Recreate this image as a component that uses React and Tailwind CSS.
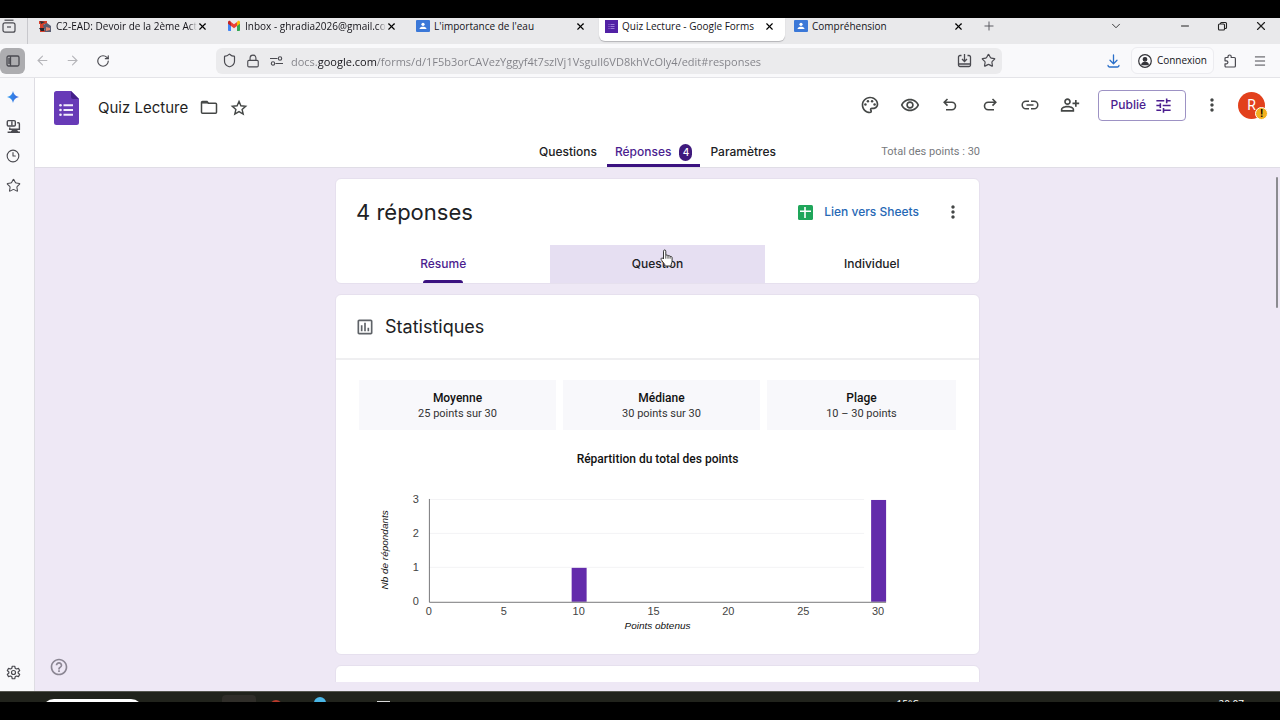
import React from "react";
import {
  Shield,
  Lock,
  Star,
  Plus,
  ChevronDown,
  Minus,
  X,
  ArrowLeft,
  ArrowRight,
  RotateCw,
  Menu,
  Clock3,
} from "lucide-react";
import {
  MdOutlinePalette,
  MdOutlineRemoveRedEye,
  MdOutlinePersonAddAlt,
  MdTune,
  MdMoreVert,
  MdOutlineAssessment,
  MdHelpOutline,
} from "react-icons/md";

const UI = "font-['Open_Sans','Noto_Sans',sans-serif]";
const PRODUCT = "font-['Inter',sans-serif]";
const BODY = "font-['Roboto',sans-serif]";

function MoodleIcon() {
  return (
    <svg viewBox="0 0 14 13" className="h-[13px] w-[14px] shrink-0">
      <path d="M1 1h8v3H6v6h2v2H2V4H1z" fill="#d8402a" />
      <path d="M5 5l4-2 4 3v6H7z" fill="#5b5f73" />
      <path d="M1 8h5v3H3z" fill="#22242c" />
      <path d="M8 7l4 1v2l-4 1z" fill="#e8866e" />
      <path d="M2 1l5 1-4 2z" fill="#2b2e38" />
    </svg>
  );
}

function GmailIcon() {
  return (
    <svg viewBox="0 0 14 12" className="h-[12px] w-[14px] shrink-0">
      <path d="M1 2v8.2c0 .5.3.8.8.8H4V5z" fill="#4285f4" />
      <path d="M13 2v8.2c0 .5-.3.8-.8.8H10V5z" fill="#34a853" />
      <path d="M10 2.2V6l3-2.2V2.3c0-1.300-1.400-1.900-2.300-1.200z" fill="#fbbc04" />
      <path d="M4 6V2l3 2.300L10 2v4L7 8.200z" fill="#ea4335" />
      <path d="M1 2.300v1.500L4 6V2.200L3.300 1.100C2.400.4 1 1 1 2.300z" fill="#c5221f" />
    </svg>
  );
}

function ClassroomIcon() {
  return (
    <svg viewBox="0 0 14 12" className="h-[12px] w-[14px] shrink-0">
      <rect width="14" height="12" rx="1" fill="#3b78d8" />
      <circle cx="7" cy="4.300" r="1.600" fill="#fff" />
      <path d="M3.500 9c0-1.700 2-2.300 3.500-2.300s3.500.6 3.500 2.300z" fill="#fff" />
    </svg>
  );
}

function FormsFavicon() {
  return (
    <svg viewBox="0 0 13 13" className="h-[13px] w-[13px] shrink-0">
      <rect width="13" height="13" fill="#5221a5" />
      <path d="M3.500 4.500h1M5.500 4.500h4M3.500 6.500h1M5.500 6.500h4M3.500 8.500h1M5.500 8.500h4" stroke="#9b7bd6" />
    </svg>
  );
}

const browserTabs = [
  { title: "C2-EAD: Devoir de la 2ème Activité", icon: <MoodleIcon />, fade: true },
  { title: "Inbox - ghradia2026@gmail.com", icon: <GmailIcon />, fade: true },
  { title: "L'importance de l'eau", icon: <ClassroomIcon /> },
  { title: "Quiz Lecture - Google Forms", icon: <FormsFavicon />, active: true },
  { title: "Compréhension", icon: <ClassroomIcon /> },
];

function BrowserTab({ title, icon, active, fade }) {
  return (
    <div
      className={`mr-[3px] flex h-[23px] w-[186px] min-w-0 items-center pr-[10px] pb-[7px] pl-[6px] ${
        active ? "rounded-b-md bg-white shadow-[0_1px_1px_#b4b4b8]" : ""
      }`}
    >
      <a href="#tab" className="flex min-w-0 flex-1 items-center gap-1">
        {icon}
        <span
          className={`block min-w-0 flex-1 overflow-hidden whitespace-nowrap ${
            fade ? "[mask-image:linear-gradient(to_left,transparent,black_8px)]" : ""
          }`}
        >
          {title}
        </span>
      </a>
      <button aria-label={`Fermer ${title}`} className="text-black">
        <X size={11} strokeWidth={2.5} />
      </button>
    </div>
  );
}

function TabStrip() {
  return (
    <div className={`flex h-[26px] shrink-0 items-start overflow-hidden bg-[#e9e9eb] text-[10px] leading-4 text-[#15141a] ${UI}`}>
      <button aria-label="Onglets récents" className="flex h-4 w-[27px] items-center pl-[2px] text-[#4a4a50]">
        <svg viewBox="0 0 14 14" className="h-[14px] w-[14px]" fill="none" stroke="currentColor" strokeWidth="1.200">
          <path d="M2.500 1.200h9" />
          <rect x="1" y="3.800" width="12" height="9.400" rx="2" />
          <path d="M5 8h4" />
        </svg>
      </button>
      <div className="h-[26px] w-px bg-[#c8c8cc]" />
      <div className="flex min-w-0 pl-1">
        {browserTabs.map((t) => (
          <BrowserTab key={t.title} {...t} />
        ))}
      </div>
      <button aria-label="Nouvel onglet" className="flex h-4 w-8 items-center pl-[5px] text-[#4a4a50]">
        <Plus size={14} strokeWidth={1.5} />
      </button>
      <div className="ml-auto flex h-4 items-center text-[#222]">
        <button aria-label="Lister les onglets" className="mr-[56px]">
          <ChevronDown size={14} strokeWidth={1.5} />
        </button>
        <button aria-label="Réduire" className="mr-[26px]">
          <Minus size={12} strokeWidth={2} />
        </button>
        <button aria-label="Restaurer" className="mr-[26px]">
          <svg viewBox="0 0 11 11" className="h-[11px] w-[11px]" fill="none" stroke="currentColor" strokeWidth="1.100">
            <rect x="1.500" y="3" width="6" height="6" rx="1" />
            <path d="M3.500 3V2.500a1 1 0 0 1 1-1h4a1 1 0 0 1 1 1v4a1 1 0 0 1-1 1H7.500" />
          </svg>
        </button>
        <button aria-label="Fermer la fenêtre" className="mr-3">
          <X size={14} strokeWidth={2} />
        </button>
      </div>
    </div>
  );
}

function Toolbar() {
  return (
    <div className={`flex h-[34px] shrink-0 items-center border-b border-[#e4e4e8] bg-[#f9f9fb] text-[#4a4a50] ${UI}`}>
      <button aria-label="Panneau latéral" className="flex h-[26px] w-[25px] shrink-0 items-center justify-center rounded-md bg-[#adadb0]">
        <svg viewBox="0 0 14 12" className="h-[12px] w-[14px]" fill="none" stroke="currentColor" strokeWidth="1.300">
          <rect x="1" y="1" width="12" height="10" rx="1.500" />
          <path d="M4.500 1v10M3 3v6" />
        </svg>
      </button>
      <button aria-label="Page précédente" className="ml-[10px] text-[#b5b5b9]">
        <ArrowLeft size={15} strokeWidth={1.7} />
      </button>
      <button aria-label="Page suivante" className="ml-[15px] text-[#b5b5b9]">
        <ArrowRight size={15} strokeWidth={1.7} />
      </button>
      <button aria-label="Actualiser" className="ml-4">
        <RotateCw size={14} strokeWidth={2} />
      </button>
      <div className="ml-[106px] flex h-[26px] min-w-0 max-w-[786px] flex-1 items-center rounded-md bg-[#ebebed] px-[6px]">
        <Shield size={15} strokeWidth={1.9} />
        <Lock size={14} strokeWidth={1.9} className="ml-[9px]" />
        <svg viewBox="0 0 13 10" className="ml-[10px] h-[10px] w-[13px]" fill="none" stroke="currentColor" strokeWidth="1.100">
          <path d="M0 2.500h7.500M5.500 7.500H13" />
          <circle cx="10" cy="2.500" r="1.700" />
          <circle cx="3" cy="7.500" r="1.700" />
        </svg>
        <input
          aria-label="Adresse"
          readOnly
          value="docs.google.com/forms/d/1F5b3orCAVezYggyf4t7szlVj1VsguIl6VD8khVcOly4/edit#responses"
          className="ml-2 h-5 min-w-0 flex-1 bg-[linear-gradient(90deg,#808086_26px,#15141a_26px,#15141a_86px,#808086_86px)] bg-clip-text pt-[2px] text-[11px] text-transparent outline-none"
        />
        <button aria-label="Installer la page" className="mr-[9px]">
          <svg viewBox="0 0 15 14" className="h-[14px] w-[15px]" fill="none" stroke="currentColor" strokeWidth="1.300">
            <path d="M4.500 1.500H3A1.500 1.500 0 0 0 1.500 3v8A1.500 1.500 0 0 0 3 12.500h9a1.500 1.500 0 0 0 1.500-1.500V3A1.500 1.500 0 0 0 12 1.500h-1.500M1.500 10h12M7.500 0v7M5 5l2.500 2.500L10 5" />
          </svg>
        </button>
        <button aria-label="Marquer cette page">
          <Star size={15} strokeWidth={1.9} />
        </button>
      </div>
      <div className="ml-auto flex items-center">
        <button aria-label="Téléchargements" className="mr-[11px] text-[#2a6fc9]">
          <svg viewBox="0 0 13 14" className="h-[14px] w-[13px]" fill="none" stroke="currentColor" strokeWidth="1.300" strokeLinecap="round" strokeLinejoin="round">
            <path d="M6.500 1v8.500M3 6.200l3.500 3.500L10 6.200M1 11.300c0 1.200.4 1.700 1.500 1.700h8c1.100 0 1.500-.5 1.500-1.700" />
          </svg>
        </button>
        <button className="mr-[9px] flex h-[27px] items-center gap-[5px] rounded-md border border-[#ececf0] bg-[#fbfbfd] px-[6px] text-[10px] text-[#15141a]">
          <svg viewBox="0 0 14 14" className="h-[14px] w-[14px]" fill="none" stroke="#333338" strokeWidth="1.200">
            <circle cx="7" cy="7" r="6.300" />
            <circle cx="7" cy="5.300" r="1.800" fill="#333338" />
            <path d="M3.800 10.600c0-3 6.400-3 6.400 0z" fill="#333338" />
          </svg>
          Connexion
        </button>
        <button aria-label="Extensions" className="mr-[16px]">
          <svg viewBox="0 0 14 14" className="h-[14px] w-[14px]" fill="none" stroke="currentColor" strokeWidth="1.200" strokeLinejoin="round">
            <path d="M5 3.500V2.600a1.600 1.600 0 0 1 3.200 0v.9h3.200a1 1 0 0 1 1 1v7.500a1 1 0 0 1-1 1H3a1 1 0 0 1-1-1V9.800h1.400a1.500 1.500 0 0 0 0-3H2V4.500a1 1 0 0 1 1-1z" />
          </svg>
        </button>
        <button aria-label="Menu" className="mr-[13px]">
          <Menu size={14} strokeWidth={1.7} />
        </button>
      </div>
    </div>
  );
}

function SideRail() {
  return (
    <nav className="flex w-[35px] shrink-0 flex-col gap-[15px] border-r border-[#dedde3] bg-[#f9f9fb] pt-3 pb-[11px] pl-[6px] text-[#4a4a50]">
      <button aria-label="Assistant">
        <svg viewBox="0 0 14 14" className="h-[14px] w-[14px]">
          <defs>
            <linearGradient id="spark" x1="0" y1="0" x2="1" y2="0">
              <stop offset="0" stopColor="#2f9bf0" />
              <stop offset="1" stopColor="#3a63dc" />
            </linearGradient>
          </defs>
          <path d="M7 1Q7.900 6.100 13 7 7.900 7.900 7 13 6.100 7.900 1 7 6.100 6.100 7 1z" fill="url(#spark)" />
        </svg>
      </button>
      <button aria-label="Onglets synchronisés">
        <svg viewBox="0 0 14 14" className="h-[15px] w-[15px]" fill="none" stroke="currentColor" strokeWidth="1.300">
          <rect x="1.200" y="1.500" width="7.500" height="5" rx="1" />
          <path d="M5.500 2v4M10.500 3.500h1a1 1 0 0 1 1 1v5h-9V8M1.500 12.300h11.500M5 12l1-1h4l1 1" />
        </svg>
      </button>
      <button aria-label="Historique">
        <Clock3 size={14} strokeWidth={1.9} />
      </button>
      <button aria-label="Marque-pages">
        <Star size={15} strokeWidth={1.7} />
      </button>
      <button aria-label="Personnaliser" className="mt-auto">
        <svg viewBox="0 0 24 24" className="h-[15px] w-[15px]" fill="none" stroke="currentColor" strokeWidth="1.900" strokeLinejoin="round">
          <path d="M10 2h4l.7 3.200 2 1.200 3.200-1 2 3.500-2.500 2.200v1.800l2.500 2.200-2 3.500-3.200-1-2 1.200L14 22h-4l-.7-3.200-2-1.200-3.200 1-2-3.500 2.500-2.200v-1.800L2.100 8.900l2-3.500 3.200 1 2-1.200z" />
          <circle cx="12" cy="12" r="3.200" />
        </svg>
      </button>
    </nav>
  );
}

function FormsLogo() {
  return (
    <svg viewBox="0 0 25 34" className="h-[34px] w-[25px] shrink-0">
      <path d="M2.500 0H17l8 8v23.500a2.500 2.500 0 0 1-2.500 2.500h-20A2.500 2.500 0 0 1 0 31.500v-29A2.500 2.500 0 0 1 2.500 0z" fill="#673ab7" />
      <path d="M17 0l8 8h-6a2 2 0 0 1-2-2z" fill="#44208a" />
      <g fill="#f3edfc">
        <circle cx="6.500" cy="14.300" r="1.300" />
        <circle cx="6.500" cy="19" r="1.300" />
        <circle cx="6.500" cy="23.700" r="1.300" />
        <path d="M9.500 13.300h9.500v2H9.500zM9.500 18h9.500v2H9.500zM9.500 22.700h9.500v2H9.500z" />
      </g>
    </svg>
  );
}

function FolderIcon() {
  return (
    <svg viewBox="0 0 18 15" className="h-[15px] w-[18px]" fill="none" stroke="currentColor" strokeWidth="1.500">
      <path d="M1.500 2.500a1 1 0 0 1 1-1H7l1.500 1.800h7a1 1 0 0 1 1 1v8a1 1 0 0 1-1 1h-13a1 1 0 0 1-1-1z" />
      <path d="M2 2.800h6" />
    </svg>
  );
}

function OutlineStar() {
  return (
    <svg viewBox="0 0 18 18" className="h-[18px] w-[18px]" fill="none" stroke="currentColor" strokeWidth="1.400">
      <path d="M9 2.400l1.900 4.400 4.800.4-3.600 3.200 1.100 4.700L9 12.600l-4.200 2.500 1.100-4.700-3.600-3.200 4.800-.4z" />
    </svg>
  );
}

function TurnArrow({ flip }) {
  return (
    <svg viewBox="0 0 18 18" className={`h-[18px] w-[18px] ${flip ? "-scale-x-100" : ""}`} fill="none" stroke="currentColor" strokeWidth="1.600">
      <path d="M6.500 3L3.200 6.300l3.300 3.300M3.500 6.300h7.300a3.700 3.700 0 0 1 0 7.400H5" />
    </svg>
  );
}

function LinkIcon() {
  return (
    <svg viewBox="0 0 18 10" className="h-[10px] w-[18px]" fill="none" stroke="currentColor" strokeWidth="1.500">
      <path d="M8 1.200H5a3.800 3.800 0 0 0 0 7.600h3M10 1.200h3a3.800 3.800 0 0 1 0 7.600h-3M5.500 5h7" />
    </svg>
  );
}

function HeaderButton({ label, children }) {
  return (
    <button aria-label={label} className="flex h-8 w-10 items-center justify-center">
      {children}
    </button>
  );
}

function FormHeader() {
  return (
    <header className={`shrink-0 border-b border-[#e0dde6] bg-white ${PRODUCT}`}>
      <div className="flex h-[59px] items-center pr-[15px] pl-[19px] text-[#444746]">
        <FormsLogo />
        <h1 className="ml-[19px] pt-px text-[15px] text-[#1f1f1f]">Quiz Lecture</h1>
        <button aria-label="Déplacer vers un dossier" className="ml-3">
          <FolderIcon />
        </button>
        <button aria-label="Activer le suivi" className="ml-3">
          <OutlineStar />
        </button>
        <div className="ml-auto flex items-center pb-[5px]">
          <HeaderButton label="Personnaliser le thème"><MdOutlinePalette size={20} /></HeaderButton>
          <HeaderButton label="Aperçu"><MdOutlineRemoveRedEye size={20} /></HeaderButton>
          <HeaderButton label="Annuler"><TurnArrow /></HeaderButton>
          <HeaderButton label="Rétablir"><TurnArrow flip /></HeaderButton>
          <HeaderButton label="Copier le lien"><LinkIcon /></HeaderButton>
          <HeaderButton label="Ajouter des collaborateurs"><MdOutlinePersonAddAlt size={20} /></HeaderButton>
          <button className="ml-2 flex h-[31px] items-center gap-2 rounded border border-[#9d92c4] px-3 text-[12px] font-medium text-[#4b1d8f]">
            Publié
            <MdTune size={19} />
          </button>
          <button aria-label="Plus d'options" className="ml-4">
            <MdMoreVert size={20} />
          </button>
          <button aria-label="Compte Google" className={`relative ml-4 h-[27px] w-[27px] rounded-full bg-[#e2401c] text-[14px] text-white ${BODY}`}>
            R
            <span className="absolute -right-[3px] -bottom-px flex h-[13px] w-[13px] items-center justify-center rounded-full border border-white bg-[#f2b01e] text-[10px] font-bold text-black">
              !
            </span>
          </button>
        </div>
      </div>
      <div className="mx-auto grid max-w-[645px] grid-cols-[1fr_auto_1fr] text-[12px] text-[#202124]">
        <span />
        <nav className="flex h-[30px] gap-[2px] font-medium">
          <a href="#questions" className="flex items-center px-2">Questions</a>
          <a href="#responses" className="flex items-center gap-2 border-b-3 border-[#3b1280] px-2 pt-[3px] text-[#4b1d8f]">
            Réponses
            <span className="flex h-[17px] w-[13px] items-center justify-center rounded-full bg-[#3f1a7d] text-[10px] text-white">4</span>
          </a>
          <a href="#settings" className="flex items-center px-2">Paramètres</a>
        </nav>
        <span className={`self-center text-right text-[11px] text-[#77797d] ${BODY}`}>Total des points : 30</span>
      </div>
    </header>
  );
}

function HandCursor() {
  return (
    <svg viewBox="0 0 14 18" className="pointer-events-none absolute top-[4px] left-1/2 ml-[3px] h-[18px] w-[14px]">
      <path
        d="M3.500 10V2.200c0-1.700 2.300-1.700 2.300 0v4.300c.6-.8 2-.6 2.200.4.700-.6 1.900-.3 2.100.6.900-.4 2 .1 2 1.200v3.500c0 1.200-.7 2-.9 2.900V17H4.700v-1.600C3.700 14 1.800 11.800 1.100 10.400c-.4-1.100.9-1.900 1.700-1.100z"
        fill="#fff"
        stroke="#222"
        strokeWidth="0.900"
      />
      <path d="M5.800 6.500v3.200M8 6.900v2.800M10.100 7.500v2.200" stroke="#222" strokeWidth="0.800" />
    </svg>
  );
}

function ResponsesCard() {
  return (
    <section className={`overflow-hidden rounded-md border border-[#e6e0ee] bg-white ${PRODUCT}`}>
      <div className="flex h-[66px] items-center pr-4 pl-5">
        <h2 className="text-[22px] text-[#202124]">4 réponses</h2>
        <a href="#sheets" className="ml-auto flex items-center gap-[11px] text-[12px] font-medium text-[#2668b5]">
          <svg viewBox="0 0 15 15" className="h-[15px] w-[15px]">
            <rect width="15" height="15" rx="1.500" fill="#1fa65a" />
            <path d="M2 6.200h11M7 2v11" stroke="#fff" strokeWidth="1.600" />
          </svg>
          Lien vers Sheets
        </a>
        <button aria-label="Options des réponses" className="ml-6 text-[#444746]">
          <MdMoreVert size={20} />
        </button>
      </div>
      <div className="grid h-[38px] grid-cols-3 text-[12px] font-medium text-[#202124]">
        <button className="flex flex-col items-center justify-between pt-[10px] text-[#4b1d8f]">
          Résumé
          <span className="h-[3px] w-10 rounded-t bg-[#3b1280]" />
        </button>
        <button className="relative bg-[#e6dff2]">
          Question
          <HandCursor />
        </button>
        <button>Individuel</button>
      </div>
    </section>
  );
}

const stats = [
  { name: "Moyenne", value: "25 points sur 30", grow: "flex-[198]" },
  { name: "Médiane", value: "30 points sur 30", grow: "flex-[198]" },
  { name: "Plage", value: "10 – 30 points", grow: "flex-[190]" },
];

const CHART = { left: 70, base: 122, unitX: 15, unitY: 34 };
const bars = [
  { points: 10, count: 1 },
  { points: 30, count: 3 },
];

function ScoreChart() {
  const x = (p) => Math.round(CHART.left + p * CHART.unitX);
  const y = (c) => CHART.base - c * CHART.unitY;
  return (
    <svg viewBox="0 0 598 160" className="block w-full font-['Liberation_Sans',sans-serif] text-[11px]" role="img" aria-label="Répartition du total des points">
      {[1, 2, 3].map((c) => (
        <path key={c} d={`M${CHART.left} ${y(c) - 0.5}H506`} stroke="#f3f3f5" />
      ))}
      {[0, 1, 2, 3].map((c) => (
        <text key={c} x="60" y={y(c) + 3} textAnchor="end" fill="#444">{c}</text>
      ))}
      {bars.map((b) => (
        <rect key={b.points} x={x(b.points) - 7} y={y(b.count)} width="15" height={b.count * CHART.unitY} fill="#632bab" />
      ))}
      <path d="M70.500 19V122.500H528" fill="none" stroke="#77777a" />
      {[0, 5, 10, 15, 20, 25, 30].map((p) => (
        <text key={p} x={x(p)} y="135" textAnchor="middle" fill="#444">{p}</text>
      ))}
      <g className="text-[10px]" fontStyle="italic" textAnchor="middle" fill="#111">
        <text x="299" y="149">Points obtenus</text>
        <text x="29" y="70" transform="rotate(-90 29 70)">Nb de répondants</text>
      </g>
    </svg>
  );
}

function StatisticsCard() {
  return (
    <section className="rounded-md border border-[#e6e0ee] bg-white">
      <div className={`flex h-[65px] items-center gap-[10px] border-b-2 border-[#efeff1] px-[19px] ${PRODUCT}`}>
        <MdOutlineAssessment size={20} className="text-[#5f6368]" />
        <h2 className="text-[18px] text-[#202124]">Statistiques</h2>
      </div>
      <div className={`px-[23px] pt-5 pb-[14px] ${BODY}`}>
        <div className="flex gap-[7px]">
          {stats.map((s) => (
            <div key={s.name} className={`flex h-[50px] flex-col items-center justify-center bg-[#f8f8fb] pt-[2px] ${s.grow}`}>
              <p className="text-[12px] leading-[15px] font-medium text-[#111]">{s.name}</p>
              <p className="text-[11px] leading-[15px] text-[#333]">{s.value}</p>
            </div>
          ))}
        </div>
        <h3 className="mt-[21px] mb-[13px] text-center text-[12px] leading-4 font-medium text-[#111]">Répartition du total des points</h3>
        <ScoreChart />
      </div>
    </section>
  );
}

function Taskbar() {
  return (
    <footer className={`flex h-[11px] shrink-0 items-start overflow-hidden border-t border-[#55564f] bg-[#21231c] text-[10px] text-white ${UI}`}>
      <button aria-label="Rechercher" className="mt-[7px] ml-[42px] h-6 w-[101px] shrink-0 rounded-full bg-white" />
      <span className="mt-[3px] ml-[79px] h-6 w-[34px] shrink-0 rounded bg-[#302e29]" />
      <span className="mt-2 ml-[14px] h-3 w-3 shrink-0 rounded-full bg-[#b93a2c]" />
      <span className="mt-[5px] ml-[32px] h-3 w-3 shrink-0 rounded-full bg-[#4ab6e6]" />
      <span className="mt-[9px] ml-[51px] h-2 w-[13px] shrink-0 bg-[#d8d8d8]" />
      <span className="mt-[7px] mr-[300px] ml-auto leading-[10px]">15°C</span>
      <span className="mt-[7px] mr-9 leading-[10px]">20:07</span>
    </footer>
  );
}

export default function App() {
  return (
    <div className="flex h-screen flex-col overflow-hidden border-y-18 border-black bg-white">
      <TabStrip />
      <Toolbar />
      <div className="flex min-h-0 flex-1">
        <SideRail />
        <div className="relative flex min-w-0 flex-1 flex-col bg-[#eee8f5]">
          <FormHeader />
          <main className="min-h-0 flex-1 overflow-hidden pb-[9px]">
            <div className="h-full overflow-hidden pt-[10px]">
              <div className="mx-auto flex max-w-[645px] flex-col gap-[10px]">
                <ResponsesCard />
                <StatisticsCard />
                <section className="h-[120px] rounded-md border border-[#e6e0ee] bg-white" />
              </div>
            </div>
          </main>
          <button aria-label="Aide" className="absolute bottom-[14px] left-[14px] text-[#8b8693]">
            <MdHelpOutline size={20} />
          </button>
          <div className="absolute top-[99px] right-[2px] h-[131px] w-[2px] rounded bg-[#8b8b90]" />
        </div>
      </div>
      <Taskbar />
    </div>
  );
}
